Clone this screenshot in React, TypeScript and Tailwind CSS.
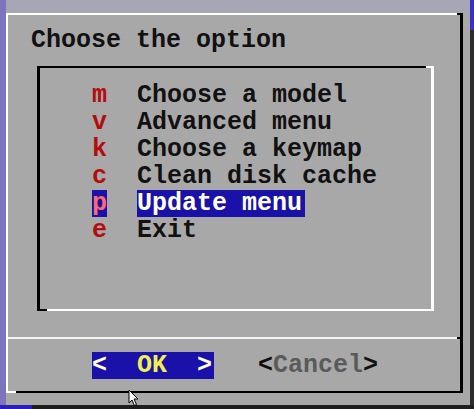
import React from "react";

const items = [
  { k: "m", t: "Choose a model" },
  { k: "v", t: "Advanced menu" },
  { k: "k", t: "Choose a keymap" },
  { k: "c", t: "Clean disk cache" },
  { k: "p", t: "Update menu", sel: true },
  { k: "e", t: "Exit" },
];

export default function App() {
  return (
    <div className="relative w-[474px] h-[409px] overflow-hidden bg-[#a8a8a8] flex flex-col font-['Liberation_Mono',monospace] text-[25px] leading-[27px] font-bold text-[#111]">
      <div className="flex h-[405px]">
        <div className="w-[6px] bg-[#7e74bc]" />
        <div className="flex flex-col w-[464px]">
          <div className="h-[13px] bg-[#a7a6b4]" />
          <div className="flex">
            <div className="relative w-[457px] h-[380px] border-l-2 border-t-2 border-white border-r-[3px] border-r-black border-b-2 border-b-black flex flex-col">
              <span className="absolute -bottom-[2px] -left-[2px] w-[10px] h-[2px] bg-white" />
              <span className="absolute -top-[2px] -right-[3px] w-[6px] h-[2px] bg-black" />
              <div className="mt-[12px] pl-[23px] h-[27px] whitespace-pre">Choose the option</div>
              <div className="relative ml-[29px] mt-[12px] w-[397px] h-[245px] border-l-[3px] border-t-2 border-black border-r-[3px] border-r-white border-b-2 border-b-white pt-[14px] pl-[52px] flex flex-col">
                <span className="absolute -top-[2px] -right-[3px] w-[8px] h-[2px] bg-white" />
                <span className="absolute -bottom-[2px] -left-[3px] w-[10px] h-[2px] bg-black" />
                {items.map((it) => (
                  <div key={it.k} className="flex h-[27px] whitespace-pre">
                    <span
                      className={
                        it.sel
                          ? "w-[15px] text-center bg-[#1a12a8] text-[#ff6a6a]"
                          : "w-[15px] text-center text-[#b40c0c]"
                      }
                    >
                      {it.k}
                    </span>
                    <span
                      className={
                        it.sel
                          ? "ml-[30px] pr-[3px] bg-[#1a12a8] text-white"
                          : "ml-[30px]"
                      }
                    >
                      {it.t}
                    </span>
                  </div>
                ))}
              </div>
              <div className="mt-[26px] h-[2px] flex">
                <div className="flex-1 bg-[#f4f4f4]" />
                <div className="w-[3px] bg-black" />
              </div>
              <div className="mt-[13px] pl-[84px] flex h-[27px] whitespace-pre">
                <div className="w-[122px] bg-[#1a12a8] flex">
                  <span className="text-white">{"<  "}</span>
                  <span className="text-[#f0f050]">OK</span>
                  <span className="text-white">{"  >"}</span>
                </div>
                <div className="ml-[44px] flex">
                  <span className="text-[#111]">{"<"}</span>
                  <span className="text-[#5a5a5a]">Cancel</span>
                  <span className="text-[#111]">{">"}</span>
                </div>
              </div>
            </div>
            <div className="w-[7px] bg-[#a8a8a8]" />
          </div>
        </div>
        <div className="w-[4px] flex flex-col">
          <div className="h-[30px] bg-[#3b30c4]" />
          <div className="flex-1 bg-[#2c2c2c]" />
        </div>
      </div>
      <div className="h-[4px] flex">
        <div className="w-[32px] bg-[#2a20b8]" />
        <div className="flex-1 bg-[#1e1e1e]" />
      </div>
      <svg
        className="absolute left-[128px] top-[389px]"
        width="12"
        height="18"
        viewBox="0 0 12 18"
      >
        <path
          d="M1 1 L1 14 L4 11 L6.5 16.5 L8.5 15.5 L6 10 L10 10 Z"
          fill="white"
          stroke="black"
          strokeWidth="1"
          strokeLinejoin="miter"
        />
      </svg>
    </div>
  );
}
